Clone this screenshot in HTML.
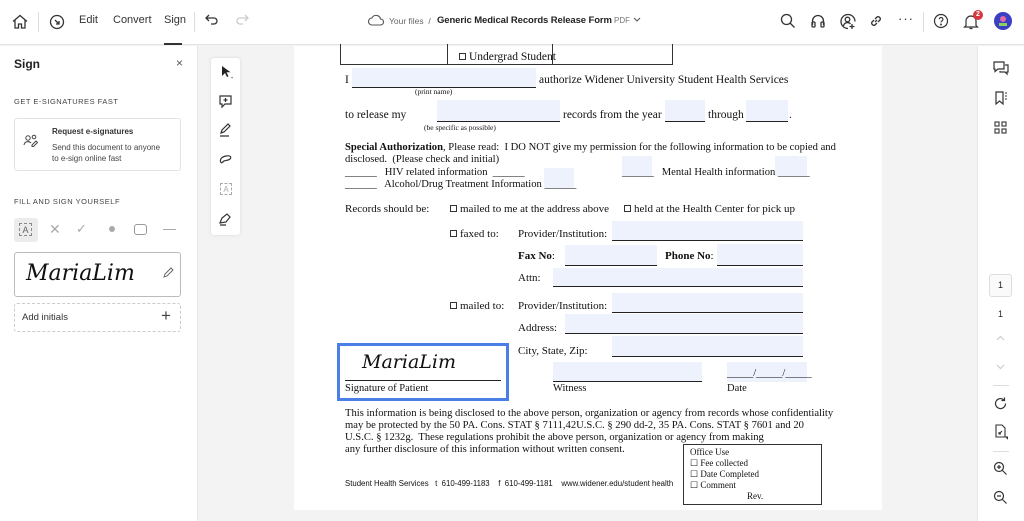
<!DOCTYPE html>
<html><head><meta charset="utf-8"><style>
*{margin:0;padding:0;box-sizing:border-box}
body{width:1024px;height:521px;overflow:hidden;background:#f3f3f3;font-family:"Liberation Sans",sans-serif;position:relative;color:#222}
.a{position:absolute;white-space:nowrap}
#top{position:absolute;left:0;top:0;width:1024px;height:45px;background:#fff;border-bottom:1px solid #e3e3e3}
#left{position:absolute;left:0;top:46px;width:198px;height:475px;background:#fff;border-right:1px solid #e6e6e6}
#right{position:absolute;left:977px;top:46px;width:47px;height:475px;background:#fff;border-left:1px solid #e6e6e6}
#pbg{position:absolute;left:294px;top:46px;width:588px;height:464px;background:#fff}
#page{position:absolute;left:294px;top:48px;width:588px;height:462px;background:#fff}
.s{font-family:"Liberation Serif",serif;font-size:11.5px;color:#111}
.f{position:absolute;background:#eef2fc}
.l{position:absolute;border-top:1px solid #222;height:0}
.cb{display:inline-block;width:7px;height:7px;border:1px solid #333;margin-right:3px;vertical-align:0}
.sig{font-family:"DejaVu Serif",serif;font-style:italic}
svg{position:absolute}
</style></head><body>
<div id="top">
<svg style="left:11px;top:13px" width="18" height="18" viewBox="0 0 18 18" fill="none" stroke="#333" stroke-width="1.3"><path d="M2 8.5L9 2.5l7 6M4 7v8h3.5v-4h3v4H14V7"/></svg>
<div class="a" style="left:38px;top:12px;width:1px;height:20px;background:#ddd"></div>
<svg style="left:48px;top:13px" width="18" height="18" viewBox="0 0 18 18" fill="none" stroke="#333" stroke-width="1.3"><circle cx="9" cy="9" r="6.5"/><path d="M7 7l4 4M8 11h3V8"/></svg>
<div class="a" style="left:79px;top:14px;font-size:11px;color:#333">Edit</div>
<div class="a" style="left:113px;top:14px;font-size:11px;color:#333">Convert</div>
<div class="a" style="left:164px;top:14px;font-size:11px;color:#333">Sign</div>
<div class="a" style="left:164px;top:43px;width:18px;height:2px;background:#333"></div>
<div class="a" style="left:194px;top:12px;width:1px;height:20px;background:#ddd"></div>
<svg style="left:204px;top:13px" width="16" height="14" viewBox="0 0 16 14" fill="none" stroke="#333" stroke-width="1.3"><path d="M5 2L2 5l3 3M2 5h8a3 3 0 010 6H7"/></svg>
<svg style="left:234px;top:13px" width="16" height="14" viewBox="0 0 16 14" fill="none" stroke="#ccc" stroke-width="1.3"><path d="M11 2l3 3-3 3M14 5H6a3 3 0 000 6h3"/></svg>
<svg style="left:368px;top:14px" width="16" height="12" viewBox="0 0 16 12" fill="none" stroke="#555" stroke-width="1.1"><path d="M4 11h8.5a3 3 0 000-6 4.5 4.5 0 00-8.5-1A3.5 3.5 0 004 11z"/></svg>
<div class="a" style="left:389px;top:16px;font-size:8.5px;color:#666">Your files &nbsp;/</div>
<div class="a" style="left:437px;top:15px;font-size:9.5px;color:#222;font-weight:bold;letter-spacing:-0.1px">Generic Medical Records Release Form</div>
<div class="a" style="left:614px;top:16px;font-size:8px;color:#777">PDF</div>
<svg style="left:633px;top:17px" width="8" height="6" viewBox="0 0 8 6" fill="none" stroke="#555" stroke-width="1.1"><path d="M1 1l3 3 3-3"/></svg>
<svg style="left:780px;top:13px" width="16" height="16" viewBox="0 0 16 16" fill="none" stroke="#333" stroke-width="1.3"><circle cx="6.5" cy="6.5" r="5"/><path d="M10 10l4.5 4.5"/></svg>
<svg style="left:810px;top:13px" width="16" height="16" viewBox="0 0 16 16" fill="none" stroke="#333" stroke-width="1.3"><path d="M2.5 12V8a5.5 5.5 0 0111 0v4"/><rect x="2" y="9" width="3" height="5" rx="1"/><rect x="11" y="9" width="3" height="5" rx="1"/></svg>
<svg style="left:839px;top:13px" width="17" height="17" viewBox="0 0 17 17" fill="none" stroke="#333" stroke-width="1.3"><path d="M9 15.5a7 7 0 117-7"/><circle cx="8.5" cy="6.5" r="2.3"/><path d="M4.5 13a4 4 0 017 -2M13 11v5M10.5 13.5h5"/></svg>
<svg style="left:868px;top:13px" width="16" height="16" viewBox="0 0 16 16" fill="none" stroke="#333" stroke-width="1.3"><path d="M7 9l2-2M6 7L4 9a2.2 2.2 0 003 3l2-2M10 9l2-2a2.2 2.2 0 00-3-3L7 6"/></svg>
<div class="a" style="left:898px;top:11px;font-size:13px;color:#333;letter-spacing:1px">···</div>
<div class="a" style="left:923px;top:12px;width:1px;height:20px;background:#ddd"></div>
<svg style="left:933px;top:13px" width="16" height="16" viewBox="0 0 16 16" fill="none" stroke="#333" stroke-width="1.2"><circle cx="8" cy="8" r="6.5"/><path d="M6.3 6.2a1.8 1.8 0 113 1.4c-.8.5-1.3.8-1.3 1.8"/><circle cx="8" cy="11.5" r=".4"/></svg>
<svg style="left:963px;top:13px" width="16" height="17" viewBox="0 0 16 17" fill="none" stroke="#333" stroke-width="1.2"><path d="M3 12.5V8a5 5 0 0110 0v4.5l1.5 1.5h-13zM6.5 15.5h3"/></svg>
<div class="a" style="left:973px;top:10px;width:10px;height:10px;border-radius:50%;background:#d7373f;color:#fff;font-size:7px;text-align:center;line-height:10px;font-weight:bold">2</div>
<div class="a" style="left:994px;top:12px;width:18px;height:18px;border-radius:50%;background:#3b3fc4"><div style="position:absolute;left:6px;top:4px;width:6px;height:6px;border-radius:50%;background:#e36aa5"></div><div style="position:absolute;left:5px;top:11px;width:8px;height:3px;background:#8bd15f"></div></div>
</div>

<div id="left">
<div class="a" style="left:14px;top:11px;font-size:12px;font-weight:bold;color:#222">Sign</div>
<div class="a" style="left:176px;top:10px;font-size:12px;color:#555">×</div>
<div class="a" style="left:14px;top:51px;font-size:7.5px;color:#444;letter-spacing:.5px">GET E-SIGNATURES FAST</div>
<div class="a" style="left:14px;top:72px;width:167px;height:53px;border:1px solid #e3e3e3;border-radius:3px"></div>
<svg style="left:23px;top:88px" width="16" height="14" viewBox="0 0 16 14" fill="none" stroke="#444" stroke-width="1"><circle cx="5" cy="4" r="2.2"/><path d="M1 11a4 4 0 017 -2"/><circle cx="11" cy="3" r="1.8"/><path d="M9 11l4-4 1.5 1.5-4 4H9z"/></svg>
<div class="a" style="left:52px;top:81px;font-size:8px;font-weight:bold;color:#333">Request e-signatures</div>
<div class="a" style="left:52px;top:96px;font-size:8px;color:#444;line-height:11px">Send this document to anyone<br>to e-sign online fast</div>
<div class="a" style="left:14px;top:151px;font-size:7.5px;color:#444;letter-spacing:.5px">FILL AND SIGN YOURSELF</div>
<div class="a" style="left:14px;top:172px;width:24px;height:24px;background:#ececec;border-radius:3px"></div>
<div class="a" style="left:19px;top:177px;width:13px;height:13px;border:1px dashed #888;font-size:9px;text-align:center;line-height:12px;color:#666">A</div>
<div class="a" style="left:49px;top:175px;font-size:14px;color:#aaa">✕</div>
<div class="a" style="left:76px;top:175px;font-size:13px;color:#aaa">✓</div>
<div class="a" style="left:109px;top:180px;width:6px;height:6px;border-radius:50%;background:#aaa"></div>
<div class="a" style="left:134px;top:178px;width:13px;height:11px;border:1.3px solid #999;border-radius:3px"></div>
<div class="a" style="left:163px;top:183px;width:13px;height:1px;background:#aaa"></div>
<div class="a" style="left:14px;top:206px;width:167px;height:45px;border:1px solid #bbb;border-radius:3px"></div>
<div class="a sig" style="left:26px;top:215px;font-size:22px;color:#111">MariaLim</div>
<svg style="left:162px;top:220px" width="13" height="13" viewBox="0 0 13 13" fill="none" stroke="#666" stroke-width="1"><path d="M2 11l1-3 6-6 2 2-6 6z"/></svg>
<div class="a" style="left:14px;top:257px;width:167px;height:29px;border:1px dashed #ccc;border-radius:3px"></div>
<div class="a" style="left:22px;top:266px;font-size:9.5px;color:#333">Add initials</div>
<div class="a" style="left:161px;top:260px;font-size:17px;color:#444;font-weight:300">+</div>
</div>

<div class="a" style="left:211px;top:58px;width:29px;height:177px;background:#fff;border-radius:3px;box-shadow:0 0 3px rgba(0,0,0,.12)"></div>
<svg style="left:219px;top:64px" width="14" height="16" viewBox="0 0 14 16"><path d="M3 2v10l3-3 2 4 1.5-.7-2-4h4z" fill="#222"/><path d="M12 13l1.5 0 0 1.5z" fill="#222"/></svg>
<svg style="left:218px;top:94px" width="16" height="16" viewBox="0 0 16 16" fill="none" stroke="#333" stroke-width="1.2"><path d="M2 2h11v8H7l-3 3v-3H2z"/><path d="M7.5 4v4M5.5 6h4"/></svg>
<svg style="left:218px;top:122px" width="16" height="16" viewBox="0 0 16 16" fill="none" stroke="#333" stroke-width="1.2"><path d="M3 11l1-3 6-6 2 2-6 6zM2 14h9"/></svg>
<svg style="left:218px;top:152px" width="16" height="14" viewBox="0 0 16 14" fill="none" stroke="#333" stroke-width="1.2"><path d="M4 11C1 10 2 5 8 4s6 3 2 4-6 1-5 3"/></svg>
<div class="a" style="left:220px;top:183px;width:12px;height:12px;border:1px dashed #aaa;font-size:8px;color:#aaa;text-align:center;line-height:11px">A</div>
<svg style="left:218px;top:211px" width="16" height="16" viewBox="0 0 16 16" fill="none" stroke="#333" stroke-width="1.2"><path d="M2 12l2-5 5-4 3 3-4 5zM2 14h6"/></svg>

<div id="pbg"></div>
<div id="page" class="s">
<div class="a" style="left:46px;top:-4px;width:333px;height:21px;border:1px solid #333;border-top:none"></div>
<div class="a" style="left:153px;top:-4px;width:1px;height:21px;background:#333"></div>
<div class="a" style="left:258px;top:-4px;width:1px;height:21px;background:#333"></div>
<div class="a" style="left:165px;top:3px"><span class="cb"></span>Undergrad Student</div>

<div class="f" style="left:58px;top:20px;width:184px;height:20px"></div>
<div class="a" style="left:51px;top:26px">I</div>
<div class="l" style="left:58px;top:39px;width:184px"></div>
<div class="a" style="left:245px;top:26px">authorize Widener University Student Health Services</div>
<div class="a" style="left:121px;top:39px;font-size:7.5px">(print name)</div>

<div class="f" style="left:143px;top:52px;width:123px;height:22px"></div>
<div class="f" style="left:371px;top:52px;width:40px;height:22px"></div>
<div class="f" style="left:452px;top:52px;width:42px;height:22px"></div>
<div class="a" style="left:51px;top:61px">to release my</div>
<div class="l" style="left:143px;top:73px;width:123px"></div>
<div class="a" style="left:269px;top:61px">records from the year</div>
<div class="l" style="left:371px;top:73px;width:40px"></div>
<div class="a" style="left:414px;top:61px">through</div>
<div class="l" style="left:452px;top:73px;width:42px"></div>
<div class="a" style="left:495px;top:61px">.</div>
<div class="a" style="left:130px;top:75px;font-size:7.5px">(be specific as possible)</div>

<div class="a" style="left:51px;top:94px;font-size:10.6px"><b>Special Authorization</b>, Please read:&nbsp; I DO NOT give my permission for the following information to be copied and</div>
<div class="a" style="left:51px;top:106px;font-size:10.6px">disclosed.&nbsp; (Please check and initial)</div>
<div class="f" style="left:328px;top:108px;width:30px;height:20px"></div>
<div class="f" style="left:481px;top:108px;width:32px;height:20px"></div>
<div class="f" style="left:250px;top:120px;width:30px;height:20px"></div>
<div class="a" style="left:51px;top:119px;font-size:10.6px">______&nbsp;&nbsp; HIV related information&nbsp; ______</div>
<div class="a" style="left:328px;top:119px;font-size:10.6px">______&nbsp;&nbsp; Mental Health information ______</div>
<div class="a" style="left:51px;top:131px;font-size:10.6px">______&nbsp;&nbsp; Alcohol/Drug Treatment Information ______</div>

<div class="a" style="left:51px;top:155px;font-size:11px">Records should be:</div>
<div class="a" style="left:156px;top:155px;font-size:11px"><span class="cb"></span>mailed to me at the address above</div>
<div class="a" style="left:330px;top:155px;font-size:11px"><span class="cb"></span>held at the Health Center for pick up</div>

<div class="f" style="left:318px;top:173px;width:191px;height:20px"></div>
<div class="a" style="left:156px;top:180px;font-size:11px"><span class="cb"></span>faxed to:</div>
<div class="a" style="left:224px;top:180px;font-size:11px">Provider/Institution:</div>
<div class="l" style="left:318px;top:192px;width:191px"></div>
<div class="f" style="left:271px;top:197px;width:92px;height:21px"></div>
<div class="f" style="left:423px;top:196px;width:86px;height:22px"></div>
<div class="a" style="left:224px;top:202px;font-size:11px"><b>Fax No</b>:</div>
<div class="l" style="left:271px;top:217px;width:92px"></div>
<div class="a" style="left:371px;top:202px;font-size:11px"><b>Phone No</b>:</div>
<div class="l" style="left:423px;top:217px;width:86px"></div>
<div class="f" style="left:259px;top:220px;width:250px;height:18px"></div>
<div class="a" style="left:224px;top:224px;font-size:11px">Attn:</div>
<div class="l" style="left:259px;top:238px;width:250px"></div>

<div class="f" style="left:318px;top:245px;width:191px;height:20px"></div>
<div class="a" style="left:156px;top:252px;font-size:11px"><span class="cb"></span>mailed to:</div>
<div class="a" style="left:224px;top:252px;font-size:11px">Provider/Institution:</div>
<div class="l" style="left:318px;top:264px;width:191px"></div>
<div class="f" style="left:271px;top:266px;width:238px;height:20px"></div>
<div class="a" style="left:224px;top:274px;font-size:11px">Address:</div>
<div class="l" style="left:271px;top:285px;width:238px"></div>
<div class="f" style="left:318px;top:288px;width:191px;height:20px"></div>
<div class="a" style="left:224px;top:297px;font-size:11px">City, State, Zip:</div>
<div class="l" style="left:318px;top:308px;width:191px"></div>

<div class="a" style="left:43px;top:295px;width:172px;height:58px;border:3px solid #4a7fe6"></div>
<div class="a sig" style="left:68px;top:303px;font-size:19px;color:#111">MariaLim</div>
<div class="l" style="left:51px;top:332px;width:156px"></div>
<div class="a" style="left:51px;top:335px;font-size:10.5px">Signature of Patient</div>
<div class="f" style="left:259px;top:314px;width:149px;height:20px"></div>
<div class="l" style="left:259px;top:333px;width:149px"></div>
<div class="a" style="left:259px;top:335px;font-size:10.5px">Witness</div>
<div class="f" style="left:433px;top:314px;width:80px;height:20px"></div>
<div class="a" style="left:433px;top:320px;font-size:10.5px">_____/_____/_____</div>
<div class="a" style="left:433px;top:335px;font-size:10.5px">Date</div>

<div class="a" style="left:51px;top:360px;font-size:10.6px;line-height:12px">This information is being disclosed to the above person, organization or agency from records whose confidentiality<br>may be protected by the 50 PA. Cons. STAT § 7111,42U.S.C. § 290 dd-2, 35 PA. Cons. STAT § 7601 and 20<br>U.S.C. § 1232g.&nbsp; These regulations prohibit the above person, organization or agency from making<br>any further disclosure of this information without written consent.</div>
<div class="a" style="left:389px;top:396px;width:139px;height:61px;border:1px solid #333;background:#fff"></div>
<div class="a" style="left:396px;top:399px;font-size:9px;line-height:11px">Office Use<br>☐ Fee collected<br>☐ Date Completed<br>☐ Comment</div>
<div class="a" style="left:453px;top:443px;font-size:9px">Rev.</div>
<div class="a" style="left:51px;top:431px;font-family:'Liberation Sans',sans-serif;font-size:7.8px">Student Health Services &nbsp; t &nbsp;610-499-1183 &nbsp;&nbsp; f &nbsp;610-499-1181 &nbsp;&nbsp; www.widener.edu/student health</div>
</div>
<div class="a" style="left:434px;top:46px;font-family:'Liberation Serif',serif;font-size:11.5px;color:#111;height:3px;overflow:hidden;width:120px;top:46px"></div>

<div id="right">
<svg style="left:14px;top:14px" width="18" height="16" viewBox="0 0 18 16" fill="none" stroke="#333" stroke-width="1.2"><path d="M2 2h10v7H6l-3 2.5V9H2z"/><path d="M13 5h3v7h-1v2l-2-2H8v-1"/></svg>
<svg style="left:16px;top:44px" width="14" height="16" viewBox="0 0 14 16" fill="none" stroke="#333" stroke-width="1.2"><path d="M2 2h7v12l-3.5-3L2 14z"/><path d="M11 3h2M11 6h2M11 9h2" stroke-width="1"/></svg>
<svg style="left:16px;top:75px" width="13" height="13" viewBox="0 0 13 13" fill="none" stroke="#333" stroke-width="1.1"><rect x="1" y="1" width="4" height="4"/><rect x="8" y="1" width="4" height="4"/><rect x="1" y="8" width="4" height="4"/><rect x="8" y="8" width="4" height="4"/></svg>
<div class="a" style="left:11px;top:228px;width:23px;height:23px;border:1px solid #ddd;border-radius:3px;background:#fafafa;font-size:9px;text-align:center;line-height:21px;color:#222">1</div>
<div class="a" style="left:20px;top:263px;font-size:9px;color:#222">1</div>
<svg style="left:18px;top:289px" width="9" height="6" viewBox="0 0 9 6" fill="none" stroke="#ccc" stroke-width="1.2"><path d="M1 5l3.5-3.5L8 5"/></svg>
<svg style="left:18px;top:318px" width="9" height="6" viewBox="0 0 9 6" fill="none" stroke="#ccc" stroke-width="1.2"><path d="M1 1l3.5 3.5L8 1"/></svg>
<div class="a" style="left:15px;top:339px;width:16px;height:1px;background:#ddd"></div>
<svg style="left:15px;top:350px" width="15" height="15" viewBox="0 0 15 15" fill="none" stroke="#333" stroke-width="1.2"><path d="M12.5 7.5a5 5 0 11-1.5-3.5M11.5 1.5v3h-3"/></svg>
<svg style="left:16px;top:378px" width="14" height="16" viewBox="0 0 14 16" fill="none" stroke="#333" stroke-width="1.1"><path d="M2 1h6l3 3v9H2z"/><path d="M5 10l3-3M5 8v2h2"/><path d="M12 13l1.5 0 0 1.5z" fill="#333"/></svg>
<div class="a" style="left:15px;top:405px;width:16px;height:1px;background:#ddd"></div>
<svg style="left:15px;top:415px" width="15" height="15" viewBox="0 0 15 15" fill="none" stroke="#333" stroke-width="1.2"><circle cx="6" cy="6" r="4.5"/><path d="M9.5 9.5l4 4M4 6h4M6 4v4"/></svg>
<svg style="left:15px;top:444px" width="15" height="15" viewBox="0 0 15 15" fill="none" stroke="#333" stroke-width="1.2"><circle cx="6" cy="6" r="4.5"/><path d="M9.5 9.5l4 4M4 6h4"/></svg>
</div>
</body></html>
